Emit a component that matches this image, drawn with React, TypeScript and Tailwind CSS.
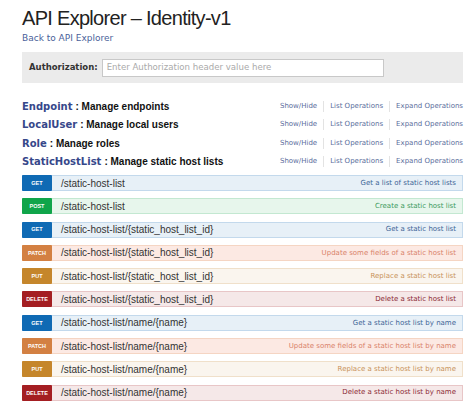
import React from "react";

const resources = [
    { name: "Endpoint", desc: "Manage endpoints" },
    { name: "LocalUser", desc: "Manage local users" },
    { name: "Role", desc: "Manage roles" },
    { name: "StaticHostList", desc: "Manage static host lists" },
];

const methodStyles: Record<string, { badge: string; row: string; text: string }> = {
    GET: { badge: "bg-[#0f6ab4]", row: "bg-[#e7f0f7] border-[#c3d9ec]", text: "text-[#3d6496]" },
    POST: { badge: "bg-[#10a54a]", row: "bg-[#e7f6ec] border-[#c3e8d1]", text: "text-[#3d9a5e]" },
    PATCH: { badge: "bg-[#d38042]", row: "bg-[#fce9e3] border-[#f5d5c3]", text: "text-[#d9826a]" },
    PUT: { badge: "bg-[#c5862b]", row: "bg-[#faf5ee] border-[#f0e0ca]", text: "text-[#c8925a]" },
    DELETE: { badge: "bg-[#a41e22]", row: "bg-[#f5e8e8] border-[#e8c6c7]", text: "text-[#8b2a35]" },
};

const operations = [
    { method: "GET", path: "/static-host-list", summary: "Get a list of static host lists" },
    { method: "POST", path: "/static-host-list", summary: "Create a static host list" },
    { method: "GET", path: "/static-host-list/{static_host_list_id}", summary: "Get a static host list" },
    { method: "PATCH", path: "/static-host-list/{static_host_list_id}", summary: "Update some fields of a static host list" },
    { method: "PUT", path: "/static-host-list/{static_host_list_id}", summary: "Replace a static host list" },
    { method: "DELETE", path: "/static-host-list/{static_host_list_id}", summary: "Delete a static host list" },
    { method: "GET", path: "/static-host-list/name/{name}", summary: "Get a static host list by name" },
    { method: "PATCH", path: "/static-host-list/name/{name}", summary: "Update some fields of a static host list by name" },
    { method: "PUT", path: "/static-host-list/name/{name}", summary: "Replace a static host list by name" },
    { method: "DELETE", path: "/static-host-list/name/{name}", summary: "Delete a static host list by name" },
];

export default function App() {
    return (
        <main className="w-[474px] h-[408px] overflow-hidden bg-white pl-[22px] pr-[11px] font-['Liberation_Sans',Arial,sans-serif]">
            {/* Header */}
            <h1 className="pt-[6px] text-[20px] leading-[24px] tracking-[-0.7px] text-[#222]">
                API Explorer – Identity-v1
            </h1>
            <a className="block mt-[2px] text-[9px] leading-[12px] text-[#4a5f9a] font-['DejaVu_Sans',Verdana,sans-serif]">
                Back to API Explorer
            </a>

            {/* Auth bar */}
            <div className="mt-[8px] h-[31px] bg-[#ebebeb] flex items-center pl-[7px]">
                <span className="text-[8.5px] font-bold text-[#333] font-['DejaVu_Sans',Verdana,sans-serif]">
                    Authorization:
                </span>
                <div className="ml-[4px] w-[282px] h-[18px] bg-white border border-[#c8c8c8] flex items-center px-[4px] text-[8.6px] text-[#aaa] font-['DejaVu_Sans',Verdana,sans-serif]">
                    Enter Authorization header value here
                </div>
            </div>

            {/* Resources */}
            <div className="mt-[14px] flex flex-col">
                {resources.map((r) => (
                    <div key={r.name} className="h-[18.5px] flex items-center">
                        <span className="text-[10px] font-bold text-[#36478a] font-['DejaVu_Sans',Verdana,sans-serif]">
                            {r.name}
                        </span>
                        <span className="ml-[3px] text-[10px] font-bold text-[#111]">: {r.desc}</span>
                        <div className="ml-auto flex items-center text-[7px] leading-[11px] text-[#5a6d9c] font-['DejaVu_Sans',Verdana,sans-serif]">
                            <span className="pr-[6px] border-r border-[#e3e3e3]">Show/Hide</span>
                            <span className="px-[6px] border-r border-[#e3e3e3]">List Operations</span>
                            <span className="pl-[6px]">Expand Operations</span>
                        </div>
                    </div>
                ))}
            </div>

            {/* Operations */}
            <div className="mt-[4px] flex flex-col gap-[7.3px]">
                {operations.map((op, i) => {
                    const s = methodStyles[op.method];
                    return (
                        <div key={i} className={`h-[16px] flex items-center border ${s.row}`}>
                            <span className={`w-[30px] h-[16px] -my-px -ml-px flex items-center justify-center text-[5.5px] font-bold text-white rounded-[1px] ${s.badge}`}>
                                {op.method}
                            </span>
                            <span className="ml-[9px] text-[10px] text-[#333]">{op.path}</span>
                            <span className={`ml-auto pr-[6px] text-[7px] font-['DejaVu_Sans',Verdana,sans-serif] ${s.text}`}>
                                {op.summary}
                            </span>
                        </div>
                    );
                })}
            </div>
        </main>
    );
}
